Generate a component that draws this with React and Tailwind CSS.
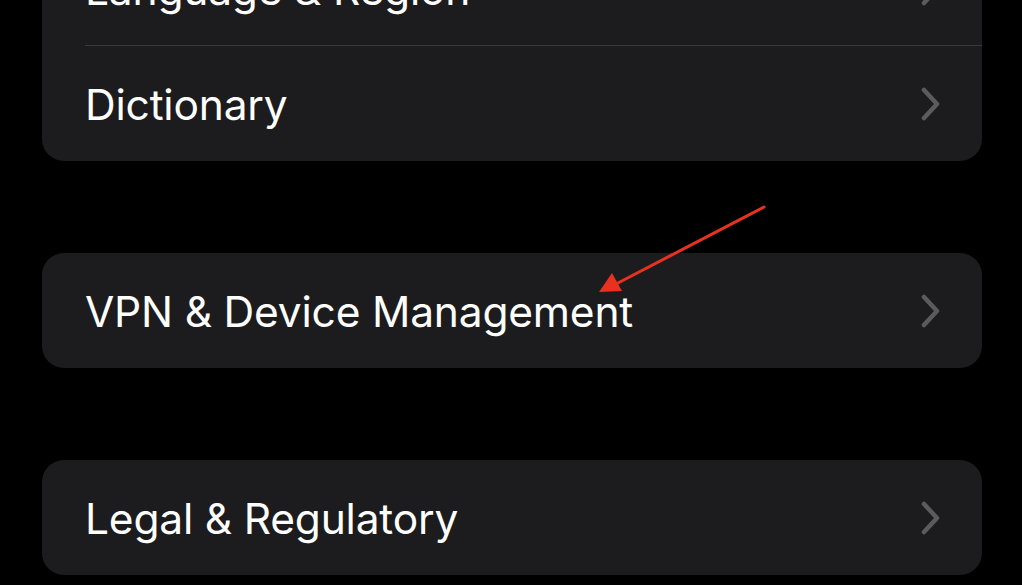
import React from "react";

function Chevron() {
  return (
    <svg width="22" height="34" viewBox="0 0 22 34" fill="none" className="shrink-0">
      <path d="M4 3 L17 17 L4 31" stroke="#5b5b5f" strokeWidth="4.5" strokeLinecap="round" strokeLinejoin="round" />
    </svg>
  );
}

function Row({ label, divider }) {
  return (
    <div className="relative flex items-center h-[115px] pl-[43px] pr-[40px]">
      <span className="flex-1 text-white text-[42.5px] tracking-[-0.2px] leading-none pt-[4px]">{label}</span>
      <Chevron />
      {divider && <div className="absolute left-[43px] right-0 bottom-0 h-px bg-[#3a3a3c]" />}
    </div>
  );
}

export default function App() {
  return (
    <div className="relative w-[1022px] h-[585px] overflow-hidden bg-black" style={{ fontFamily: "Inter, 'Noto Sans', sans-serif" }}>
      <div className="flex flex-col gap-[92px] ml-[42px] w-[940px] mt-[-69px]">
        <div className="bg-[#1c1c1e] rounded-[22px] overflow-hidden">
          <Row label="Language & Region" divider />
          <Row label="Dictionary" />
        </div>
        <div className="bg-[#1c1c1e] rounded-[22px]">
          <Row label="VPN & Device Management" />
        </div>
        <div className="bg-[#1c1c1e] rounded-[22px]">
          <Row label="Legal & Regulatory" />
        </div>
      </div>

      <svg className="absolute left-0 top-0 pointer-events-none" width="1022" height="585" viewBox="0 0 1022 585">
        <line x1="764" y1="207" x2="616" y2="284" stroke="#e8321f" strokeWidth="3" strokeLinecap="round" />
        <polygon points="599,292 612,273 622,291" fill="#e8321f" />
      </svg>
    </div>
  );
}
